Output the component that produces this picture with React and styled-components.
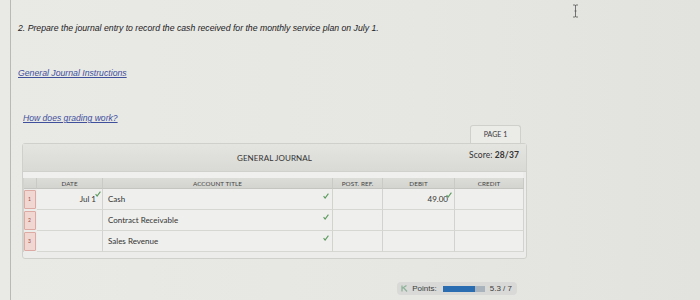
import React from 'react';
import styled, { createGlobalStyle } from 'styled-components';

const GlobalStyle = createGlobalStyle`
  html, body {
    margin: 0;
    padding: 0;
    background: #e7e7e4;
  }
`;

const Page = styled.div`
  position: relative;
  width: 700px;
  height: 300px;
  overflow: hidden;
  background: linear-gradient(90deg, #e9e9e6 0%, #e6e6e3 60%, #e2e2df 100%);
  font-family: "Liberation Sans", Arial, sans-serif;
`;

const Content = styled.div`
  margin-left: 10px;
  height: 300px;
  border-left: 1px solid #b9b9b6;
  padding: 22px 0 0 7px;
  box-sizing: border-box;
`;

const Question = styled.p`
  margin: 0;
  font-size: 8.7px;
  line-height: 12px;
  font-style: italic;
  color: #222;
`;

const HelpLink = styled.a`
  display: block;
  width: max-content;
  margin: ${(p) => p.$gap}px 0 0 ${(p) => p.$indent || 0}px;
  font-size: ${(p) => p.$size || 8.7}px;
  line-height: 12px;
  font-style: italic;
  color: #3f4f9c;
  text-decoration: underline;
`;

const Journal = styled.div`
  width: 505px;
  margin: 1px 0 0 4px;
  font-family: Lato, "Open Sans", sans-serif;
  color: #333;
`;

const TabRow = styled.div`
  display: flex;
  justify-content: flex-end;
  padding-right: 6px;
`;

const Tab = styled.div`
  width: 49px;
  height: 17px;
  border: 1px solid #cfcfcb;
  border-bottom: none;
  border-radius: 3px 3px 0 0;
  background: #ebebe8;
  font-size: 7px;
  line-height: 17px;
  text-align: center;
  color: #3a3a3a;
`;

const Panel = styled.div`
  border: 1px solid #cfcfcb;
  border-radius: 3px;
  background: #ececea;
  padding: 0 3px 6px 0;
`;

const Band = styled.div`
  position: relative;
  height: 27px;
  display: flex;
  align-items: center;
  justify-content: center;
  background: linear-gradient(180deg, #e4e4e1 0%, #d9d9d5 100%);
  border-bottom: 1px solid #d0d0cc;
  font-size: 8px;
  letter-spacing: 0.1px;
  margin-right: -3px;
`;

const Score = styled.div`
  position: absolute;
  right: 7px;
  top: 6px;
  font-size: 8.5px;

  b {
    font-weight: 700;
  }
`;

const Strip = styled.div`
  height: 6px;
  background: #f0f0ee;
`;

const Table = styled.div`
  display: grid;
  grid-template-columns: 13px 66px 230px 50px 72px 69px;
  grid-auto-rows: 21px;
  grid-template-rows: 11px;
  border-left: 1px solid #d2d2ce;
`;

const HeadCell = styled.div`
  background: linear-gradient(180deg, #dcdcd8 0%, #d3d3cf 100%);
  border-right: 1px solid #c9c9c5;
  border-bottom: 1px solid #c4c4c0;
  font-size: 6.3px;
  line-height: 11px;
  text-align: center;
  color: #444;
  letter-spacing: 0.1px;
`;

const Cell = styled.div`
  position: relative;
  display: flex;
  align-items: center;
  justify-content: ${(p) => (p.$right ? 'flex-end' : 'flex-start')};
  padding: 0 ${(p) => (p.$right ? 6 : 5)}px 0 ${(p) => (p.$right ? 0 : 5)}px;
  background: #efefed;
  border-right: 1px solid #d2d2ce;
  border-bottom: 1px solid #d6d6d2;
  font-size: 8px;
  color: #333;
`;

const RowNum = styled.div`
  background: #f0d7d2;
  border: 1px solid #dcaaa2;
  border-radius: 1px;
  margin: 1px 1px 1px 0;
  font-size: 5px;
  line-height: 17px;
  padding-left: 3px;
  color: #a04a45;
`;

const Tick = styled.svg`
  position: absolute;
  top: ${(p) => p.$top || 3}px;
  right: ${(p) => p.$right || 2}px;
  width: 6px;
  height: 6px;
`;

const Footer = styled.div`
  display: flex;
  justify-content: flex-end;
  margin-top: 23px;
  width: 499px;
`;

const PointsPill = styled.div`
  display: flex;
  align-items: center;
  gap: 4px;
  height: 13px;
  padding: 0 5px 0 4px;
  border-radius: 4px;
  background: #d9dad8;
  font-family: "Liberation Sans", Arial, sans-serif;
  font-size: 8px;
  color: #3c3c3c;
`;

const Bar = styled.div`
  width: 42px;
  height: 6px;
  background: #a9b3bd;
  margin: 0 1px 0 2px;
`;

const BarFill = styled.div`
  height: 100%;
  background: #2a6db0;
`;

const Cursor = styled.svg`
  position: absolute;
  left: 572px;
  top: 4px;
  width: 7px;
  height: 14px;
`;

const Check = ({ top, right }) => (
  <Tick viewBox="0 0 6 6" $top={top} $right={right}>
    <path d="M0.6 3.2 L2.1 5 L5.4 0.6" fill="none" stroke="#5c9a5e" strokeWidth="1.1" />
  </Tick>
);

const rows = [
  { n: 1, date: 'Jul 1', title: 'Cash', debit: '49.00' },
  { n: 2, date: '', title: 'Contract Receivable', debit: '' },
  { n: 3, date: '', title: 'Sales Revenue', debit: '' },
];

const App = () => {
  return (
    <Page>
      <GlobalStyle />
      <Content>
        <Question>
          2. Prepare the journal entry to record the cash received for the monthly service plan on July 1.
        </Question>
        <HelpLink href="#" $gap={33}>General Journal Instructions</HelpLink>
        <HelpLink href="#" $gap={33} $indent={5} $size={8.6}>How does grading work?</HelpLink>

        <Journal>
          <TabRow>
            <Tab>PAGE 1</Tab>
          </TabRow>
          <Panel>
            <Band>
              GENERAL JOURNAL
              <Score>
                Score: <b>28/37</b>
              </Score>
            </Band>
            <Strip />
            <Table>
              <HeadCell />
              <HeadCell>DATE</HeadCell>
              <HeadCell>ACCOUNT TITLE</HeadCell>
              <HeadCell>POST. REF.</HeadCell>
              <HeadCell>DEBIT</HeadCell>
              <HeadCell>CREDIT</HeadCell>
              {rows.map((r) => (
                <React.Fragment key={r.n}>
                  <RowNum>{r.n}</RowNum>
                  <Cell $right>
                    {r.date}
                    {r.date && <Check top={2} right={1} />}
                  </Cell>
                  <Cell>
                    {r.title}
                    <Check top={4} right={3} />
                  </Cell>
                  <Cell />
                  <Cell $right>
                    {r.debit}
                    {r.debit && <Check top={3} right={0} />}
                  </Cell>
                  <Cell />
                </React.Fragment>
              ))}
            </Table>
          </Panel>
        </Journal>

        <Footer>
          <PointsPill>
            <svg width="7" height="7" viewBox="0 0 7 7">
              <path d="M1 0.5 V6.5 M1 3.5 L5.5 0.5 M2.5 2.6 L6 6.5" stroke="#8fb39a" strokeWidth="1.3" fill="none" />
            </svg>
            Points:
            <Bar>
              <BarFill style={{ width: `${(5.3 / 7) * 100}%` }} />
            </Bar>
            5.3 / 7
          </PointsPill>
        </Footer>
      </Content>
      <Cursor viewBox="0 0 7 14">
        <path d="M1 1 H3 Q3.5 1 3.5 2 V12 Q3.5 13 3 13 H1 M6 1 H4 Q3.5 1 3.5 2 M6 13 H4 Q3.5 13 3.5 12 M2.5 7 H4.5" stroke="#555" strokeWidth="0.8" fill="none" />
      </Cursor>
    </Page>
  );
};

export default App;
